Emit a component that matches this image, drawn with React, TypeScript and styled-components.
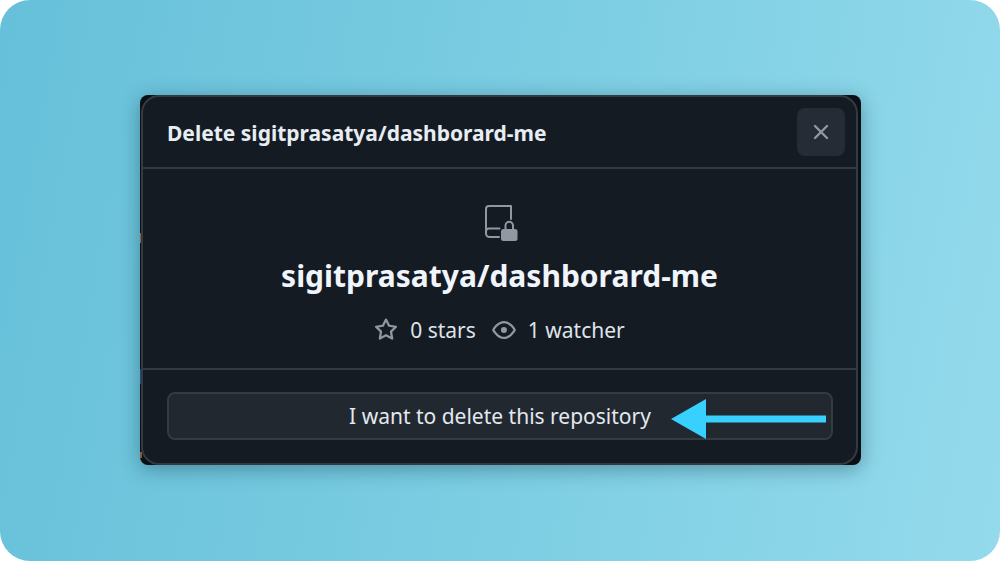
import React from "react";
import styled, { createGlobalStyle } from "styled-components";

const GlobalStyle = createGlobalStyle`
  * { box-sizing: border-box; }
  body {
    margin: 0;
    background: #ffffff;
    font-family: "Noto Sans", sans-serif;
    color: #e6edf3;
  }
`;

const Stage = styled.main`
  min-height: 100vh;
  padding: 24px 139px 25px 140px;
  display: flex;
  align-items: center;
  border-radius: 30px;
  background: linear-gradient(100deg, #66c0d9 0%, #7bcde2 50%, #94daec 100%);
`;

/* The dark strip of the page that shows behind the dialog */
const Frame = styled.div`
  flex: 1;
  min-width: 0;
  padding: 0 3px 0 1px;
  border-radius: 8px;
  background:
    linear-gradient(#8a6238, #8a6238) 0 138px / 2px 10px no-repeat,
    linear-gradient(#1f4a80, #1f4a80) 0 274px / 2px 15px no-repeat,
    linear-gradient(#8a5a38, #8a5a38) 0 357px / 2px 6px no-repeat,
    #0c1016;
  box-shadow: 0 4px 20px rgba(10, 50, 66, 0.4);
`;

const Dialog = styled.section`
  border: 2px solid #343a42;
  border-radius: 18px;
  background: #151b23;
`;

const Header = styled.header`
  display: flex;
  align-items: center;
  justify-content: space-between;
  padding: 11px 11px 11px 24px;
  border-bottom: 2px solid #343a42;
`;

const Title = styled.h1`
  margin: 2px 0 0;
  font-size: 21px;
  line-height: 32px;
  font-weight: 700;
`;

const CloseButton = styled.button`
  display: grid;
  place-items: center;
  width: 48px;
  height: 48px;
  padding: 0;
  border: 0;
  border-radius: 8px;
  background: #262c36;
  color: #9198a1;
  cursor: pointer;
`;

const Summary = styled.div`
  display: flex;
  flex-direction: column;
  align-items: center;
  padding: 36px 24px 22px;
  border-bottom: 2px solid #343a42;
  color: #9198a1;
`;

const RepoName = styled.h2`
  margin: 12px 0 15px;
  font-size: 30px;
  line-height: 46px;
  font-weight: 700;
  color: #f0f4fb;
`;

const Stats = styled.ul`
  display: flex;
  gap: 16px;
  margin: 0;
  padding: 0;
  list-style: none;
`;

const Stat = styled.li`
  display: flex;
  align-items: center;
  gap: 12px;
  font-size: 21px;
  line-height: 32px;
`;

const StatText = styled.span`
  color: #dfe4ea;
`;

const Footer = styled.footer`
  padding: 22px 23px 23px 24px;
`;

const ConfirmButton = styled.button`
  position: relative;
  display: block;
  width: 100%;
  height: 48px;
  padding: 0;
  border: 2px solid #343b43;
  border-radius: 8px;
  background: #212830;
  color: #e4e9ef;
  font-family: inherit;
  font-size: 21px;
  line-height: 32px;
  cursor: pointer;
`;

const Arrow = styled.svg`
  position: absolute;
  right: 5px;
  top: 5px;
`;

const RepoLockedIcon = () => (
  <svg width="36" height="36" viewBox="0 0 36 36" fill="none" stroke="currentColor" strokeWidth="2" aria-hidden="true">
    <path d="M17 32H7.5A3.5 3.5 0 0 1 4 28.500V4a3 3 0 0 1 3-3H29V14" strokeLinejoin="round" strokeLinecap="round" />
    <path d="M4 28V26.500A3 3 0 0 1 7 23.500H17.500" strokeLinecap="round" />
    <path d="M23.500 25V20.500a3.750 3.750 0 0 1 7.500 0V25" />
    <rect x="19" y="24" width="16.500" height="12" rx="2.500" fill="currentColor" stroke="none" />
  </svg>
);

const StarIcon = () => (
  <svg width="24" height="24" viewBox="0 0 16 16" fill="currentColor" aria-hidden="true">
    <path d="M8 .25a.75.75 0 0 1 .673.418l1.882 3.815 4.21.612a.75.75 0 0 1 .416 1.279l-3.046 2.97.719 4.192a.751.751 0 0 1-1.088.791L8 12.347l-3.766 1.98a.75.75 0 0 1-1.088-.79l.72-4.194L.818 6.374a.75.75 0 0 1 .416-1.28l4.21-.611L7.327.668A.75.75 0 0 1 8 .25Zm0 2.445L6.615 5.5a.75.75 0 0 1-.564.41l-3.097.45 2.24 2.184a.75.75 0 0 1 .216.664l-.528 3.084 2.769-1.456a.75.75 0 0 1 .698 0l2.77 1.456-.53-3.084a.75.75 0 0 1 .216-.664l2.24-2.183-3.096-.45a.75.75 0 0 1-.564-.41L8 2.694Z" />
  </svg>
);

const EyeIcon = () => (
  <svg width="24" height="24" viewBox="0 0 16 16" fill="currentColor" aria-hidden="true">
    <path d="M8 2c1.981 0 3.671.992 4.933 2.078 1.27 1.091 2.187 2.345 2.637 3.023a1.62 1.62 0 0 1 0 1.798c-.45.678-1.367 1.932-2.637 3.023C11.67 13.008 9.981 14 8 14c-1.981 0-3.671-.992-4.933-2.078C1.797 10.83.88 9.576.43 8.898a1.62 1.62 0 0 1 0-1.798c.45-.677 1.367-1.931 2.637-3.022C4.33 2.992 6.019 2 8 2ZM1.679 7.932a.12.12 0 0 0 0 .136c.411.622 1.241 1.75 2.366 2.717C5.176 11.758 6.527 12.5 8 12.5c1.473 0 2.825-.742 3.955-1.715 1.124-.967 1.954-2.096 2.366-2.717a.12.12 0 0 0 0-.136c-.412-.621-1.242-1.75-2.366-2.717C10.824 4.242 9.473 3.5 8 3.5c-1.473 0-2.825.742-3.955 1.715-1.124.967-1.954 2.096-2.366 2.717ZM8 10a2 2 0 1 1-.001-3.999A2 2 0 0 1 8 10Z" />
  </svg>
);

const CloseIcon = () => (
  <svg width="24" height="24" viewBox="0 0 24 24" fill="none" stroke="currentColor" strokeWidth="2.4" strokeLinecap="round" aria-hidden="true">
    <path d="M6 6l12 12M18 6L6 18" />
  </svg>
);

export default function App() {
  return (
    <>
      <GlobalStyle />
      <Stage>
        <Frame>
          <Dialog role="dialog" aria-labelledby="dialog-title">
            <Header>
              <Title id="dialog-title">Delete sigitprasatya/dashborard-me</Title>
              <CloseButton type="button" aria-label="Close">
                <CloseIcon />
              </CloseButton>
            </Header>
            <Summary>
              <RepoLockedIcon />
              <RepoName>sigitprasatya/dashborard-me</RepoName>
              <Stats>
                <Stat>
                  <StarIcon />
                  <StatText>0 stars</StatText>
                </Stat>
                <Stat>
                  <EyeIcon />
                  <StatText>1 watcher</StatText>
                </Stat>
              </Stats>
            </Summary>
            <Footer>
              <ConfirmButton type="button">
                I want to delete this repository
                <Arrow width="155" height="40" viewBox="0 0 155 40" fill="#38d0ff" aria-hidden="true">
                  <path d="M0 20L35 0V16.500H155V23.500H35V40Z" />
                </Arrow>
              </ConfirmButton>
            </Footer>
          </Dialog>
        </Frame>
      </Stage>
    </>
  );
}
